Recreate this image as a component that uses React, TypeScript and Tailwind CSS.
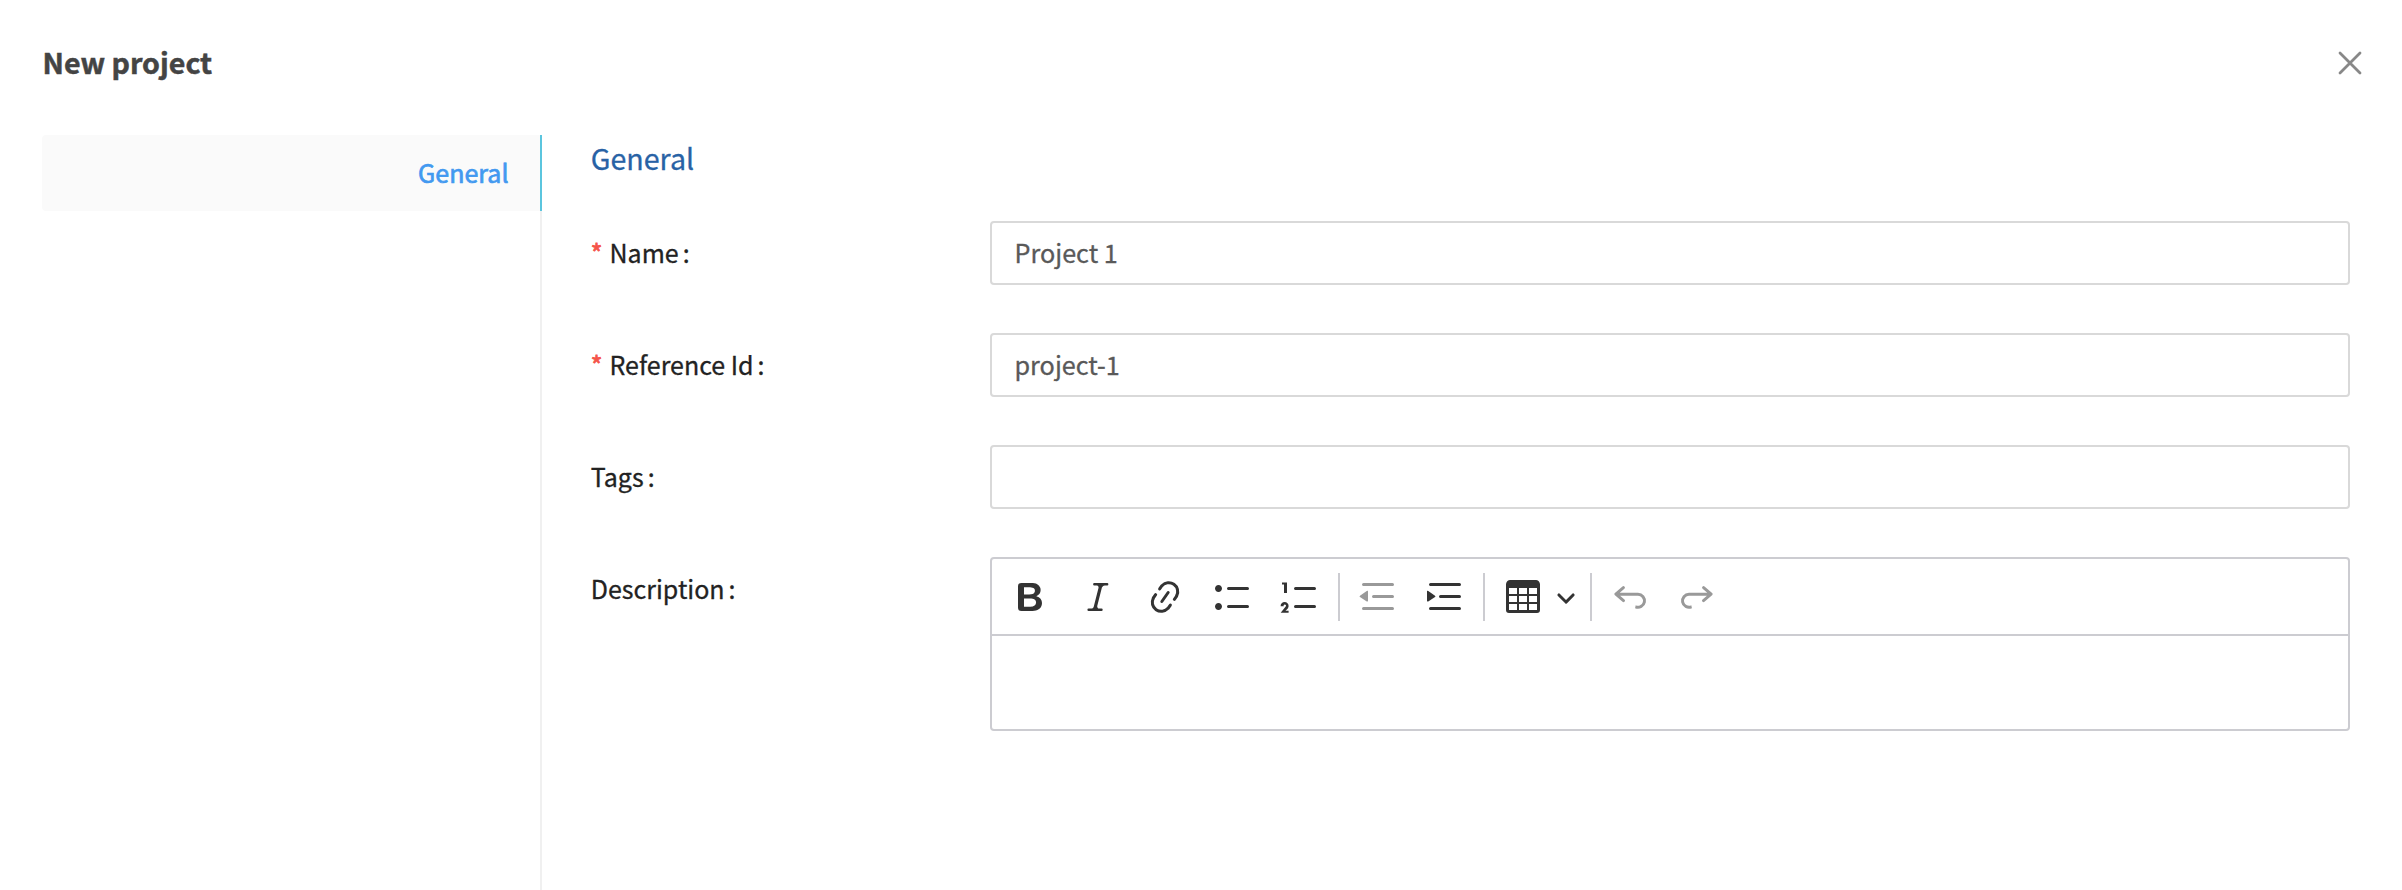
import type { ReactNode } from "react";

const ICONS = {
  bold: "M10.187 17H5.773c-.637 0-1.092-.138-1.364-.415-.273-.277-.409-.718-.409-1.323V4.738c0-.617.14-1.062.419-1.332.279-.27.73-.406 1.354-.406h4.68c.69 0 1.288.041 1.793.124.506.083.96.242 1.36.478.341.197.644.447.906.75a3.262 3.262 0 0 1 .808 2.162c0 1.401-.722 2.426-2.167 3.075C15.05 10.175 16 11.315 16 13.01a3.756 3.756 0 0 1-2.296 3.504 6.1 6.1 0 0 1-1.517.377c-.571.073-1.238.11-2 .11zm-.217-6.217H7v4.087h3.069c1.977 0 2.965-.69 2.965-2.072 0-.707-.256-1.22-.768-1.537-.512-.319-1.277-.478-2.296-.478zM7 5.13v3.619h2.606c.729 0 1.292-.067 1.69-.2a1.6 1.6 0 0 0 .91-.765c.165-.267.247-.566.247-.897 0-.707-.26-1.176-.778-1.409-.519-.232-1.31-.348-2.375-.348H7z",
  italic:
    "m9.586 14.633.021.004c-.036.335.095.655.393.962.082.083.173.15.274.201h1.474a.6.6 0 1 1 0 1.2H5.304a.6.6 0 0 1 0-1.2h1.15c.474-.07.809-.182 1.005-.334.157-.122.291-.32.404-.597l2.416-9.55a1.053 1.053 0 0 0-.281-.823 1.12 1.12 0 0 0-.442-.296H8.15a.6.6 0 0 1 0-1.2h6.443a.6.6 0 1 1 0 1.2h-1.195c-.376.056-.65.155-.823.296-.215.175-.423.439-.623.79l-2.366 9.347z",
  link: "m11.077 15 .991-1.416a.75.75 0 1 1 1.229.86l-1.148 1.64a.748.748 0 0 1-.217.206 5.251 5.251 0 0 1-8.503-5.955.741.741 0 0 1 .12-.274l1.147-1.639a.75.75 0 1 1 1.228.86L4.933 10.7l.006.003a3.75 3.75 0 0 0 6.132 4.294l.006.004zm5.494-5.335a.748.748 0 0 1-.12.274l-1.147 1.639a.75.75 0 1 1-1.228-.86l.86-1.23a3.75 3.75 0 0 0-6.144-4.301l-.86 1.229a.75.75 0 0 1-1.229-.86l1.148-1.64a.748.748 0 0 1 .217-.206 5.251 5.251 0 0 1 8.503 5.955zm-4.563-2.532a.75.75 0 0 1 .184 1.045l-3.155 4.505a.75.75 0 1 1-1.229-.86l3.155-4.506a.75.75 0 0 1 1.045-.184z",
  bulleted:
    "M7 5.75c0 .414.336.75.75.75h9.5a.75.75 0 1 0 0-1.5h-9.5a.75.75 0 0 0-.75.75zm-6 0C1 4.784 1.777 4 2.75 4c.966 0 1.75.777 1.75 1.75 0 .966-.777 1.75-1.75 1.75C1.784 7.5 1 6.723 1 5.75zm6 9c0 .414.336.75.75.75h9.5a.75.75 0 1 0 0-1.5h-9.5a.75.75 0 0 0-.75.75zm-6 0c0-.966.777-1.75 1.75-1.75.966 0 1.75.777 1.75 1.75 0 .966-.777 1.75-1.75 1.75-.966 0-1.75-.777-1.75-1.75z",
  numbered:
    "M7 5.75c0 .414.336.75.75.75h9.5a.75.75 0 1 0 0-1.5h-9.5a.75.75 0 0 0-.75.75zM3.5 3v5H2V3.7H1v-1h2.5V3zM.343 17.857l2.59-3.257H2.92a.6.6 0 1 0-1.04 0H.302a2 2 0 1 1 3.995 0h-.001c-.048.405-.16.734-.333.988-.175.254-.59.692-1.244 1.312H4.3v1h-4l.043-.043zM7 14.75a.75.75 0 0 1 .75-.75h9.5a.75.75 0 1 1 0 1.5h-9.5a.75.75 0 0 1-.75-.75z",
  outdent:
    "M2 3.75c0 .414.336.75.75.75h14.5a.75.75 0 1 0 0-1.5H2.75a.75.75 0 0 0-.75.75zm5 6c0 .414.336.75.75.75h9.5a.75.75 0 1 0 0-1.5h-9.5a.75.75 0 0 0-.75.75zM2.75 16.5h14.5a.75.75 0 1 0 0-1.5H2.75a.75.75 0 1 0 0 1.5zm1.618-9.55L.98 9.358a.4.4 0 0 0 .013.661l3.39 2.207A.4.4 0 0 0 5 11.892V7.275a.4.4 0 0 0-.632-.326z",
  indent:
    "M2 3.75c0 .414.336.75.75.75h14.5a.75.75 0 1 0 0-1.5H2.75a.75.75 0 0 0-.75.75zm5 6c0 .414.336.75.75.75h9.5a.75.75 0 1 0 0-1.5h-9.5a.75.75 0 0 0-.75.75zM2.75 16.5h14.5a.75.75 0 1 0 0-1.5H2.75a.75.75 0 1 0 0 1.5zM1.632 6.95 5.02 9.358a.4.4 0 0 1-.013.661l-3.39 2.207A.4.4 0 0 1 1 11.892V7.275a.4.4 0 0 1 .632-.326z",
  table:
    "M3 5.5v3h4v-3H3zm0 4v3h4v-3H3zm0 4v3h4v-3H3zm5 3h4v-3H8v3zm5 0h4v-3h-4v3zm4-4v-3h-4v3h4zm0-4v-3h-4v3h4zm1.5 8a1.5 1.5 0 0 1-1.5 1.5H3a1.5 1.5 0 0 1-1.5-1.5V3.5c.222-1.2 1.068-2 2-2h13c.932 0 1.778.8 2 2v13zM12 12.5v-3H8v3h4zm0-4v-3H8v3h4z",
  undo: "m5.042 9.367 2.189 1.837a.75.75 0 0 1-.965 1.149l-3.788-3.18a.747.747 0 0 1-.21-.284.75.75 0 0 1 .17-.945L6.23 4.762a.75.75 0 1 1 .964 1.15L4.863 7.866h8.917A.75.75 0 0 1 14 7.9a4 4 0 1 1-1.477 7.718l.344-1.489a2.5 2.5 0 1 0 1.094-4.73l.008-.032H5.042z",
  redo: "m14.958 9.367-2.189 1.837a.75.75 0 0 0 .965 1.149l3.788-3.18a.747.747 0 0 0 .21-.284.75.75 0 0 0-.17-.945L13.77 4.762a.75.75 0 1 0-.964 1.15l2.331 1.955H6.22A.75.75 0 0 0 6 7.9a4 4 0 1 0 1.477 7.718l-.344-1.489A2.5 2.5 0 1 1 6.039 9.4l-.008-.032h8.927z",
};

function Tool({ icon, label, disabled }: { icon: keyof typeof ICONS; label: string; disabled?: boolean }) {
  return (
    <button aria-label={label} disabled={disabled} className="size-10 shrink-0 text-[#333333] disabled:text-[#999999]">
      <svg viewBox="0 0 20 20" className="size-10 fill-current">
        <path d={ICONS[icon]} />
      </svg>
    </button>
  );
}

function Separator({ className }: { className: string }) {
  return <div className={`h-12 w-0.5 shrink-0 bg-[#ccccd1] ${className}`} />;
}

function Field({ label, required, children }: { label: string; required?: boolean; children: ReactNode }) {
  return (
    <div className="flex items-start">
      <div className="flex h-16 w-[400px] shrink-0 items-center pl-[0.8px] text-[25px] text-[#222222] [-webkit-text-stroke:0.3px]">
        {required && <span className="mr-[7px] text-[#f5554a] [-webkit-text-stroke:0.8px]">*</span>}
        <span>{label}</span>
        <span className="ml-1">:</span>
      </div>
      {children}
    </div>
  );
}

function TextInput({ value }: { value: string }) {
  return (
    <input
      defaultValue={value}
      className="h-16 min-w-0 flex-1 rounded-[4px] border-2 border-[#d9d9d9] bg-white px-[22.5px] pb-0.5 text-[25.2px] text-[#595959] outline-none [-webkit-text-stroke:0.3px]"
    />
  );
}

function Editor() {
  return (
    <div className="h-[174px] min-w-0 flex-1 rounded-[4px] border-2 border-[#ccccd1]">
      <div className="flex h-[77px] items-start border-b-2 border-[#ccccd1] pt-[14px] pl-[18px]">
        <div className="flex h-12 items-center">
          <div className="flex gap-[27.6px]">
            <Tool icon="bold" label="Bold" />
            <Tool icon="italic" label="Italic" />
            <Tool icon="link" label="Link" />
            <Tool icon="bulleted" label="Bulleted List" />
            <Tool icon="numbered" label="Numbered List" />
          </div>
          <Separator className="ml-[17.6px]" />
          <div className="ml-[18px] flex gap-[27px]">
            <Tool icon="outdent" label="Decrease indent" disabled />
            <Tool icon="indent" label="Increase indent" />
          </div>
          <Separator className="ml-[18px]" />
          <div className="ml-[18px] flex items-center gap-[13px]">
            <Tool icon="table" label="Insert table" />
            <svg viewBox="0 0 10 10" className="size-5 fill-[#333333]">
              <path d="M.941 4.523a.75.75 0 1 1 1.06-1.06l3.006 3.005 3.005-3.005a.75.75 0 1 1 1.06 1.06l-3.549 3.55a.75.75 0 0 1-1.168-.136L.941 4.523z" />
            </svg>
          </div>
          <Separator className="ml-[14px]" />
          <div className="ml-[18px] flex gap-[27.4px]">
            <Tool icon="undo" label="Undo" disabled />
            <Tool icon="redo" label="Redo" disabled />
          </div>
        </div>
      </div>
    </div>
  );
}

export default function App() {
  return (
    <div className="flex h-[890px] w-[2402px] flex-col overflow-hidden bg-white font-['Noto_Sans_CJK_SC','Noto_Sans',sans-serif]">
      <header className="flex h-[135px] shrink-0 items-start justify-between pl-[42.5px] pr-10">
        <h1 className="mt-10 text-[28.6px] leading-[44px] font-bold text-[#444444] [-webkit-text-stroke:0.5px]">
          New project
        </h1>
        <button aria-label="Close" className="mt-[51px]">
          <svg viewBox="0 0 24 24" className="size-6 stroke-[#888888]" strokeWidth="2.8" strokeLinecap="round">
            <path d="M2 2 22 22M22 2 2 22" />
          </svg>
        </button>
      </header>
      <div className="flex flex-1 pl-[42px]">
        <nav className="w-[500px] shrink-0">
          <div className="flex h-full flex-col">
            <a className="flex h-[76px] items-center justify-end rounded-l-[4px] border-r-2 border-[#5bc5de] bg-[#fafafa] pr-[31.5px] text-[25px] text-[#4299f0] [-webkit-text-stroke:0.7px]">
              General
            </a>
            <div className="flex-1 border-r-2 border-[#f0f0f0]" />
          </div>
        </nav>
        <main className="flex-1 pl-12 pr-[52px]">
          <h2 className="mt-px mb-[41px] pl-[0.8px] text-[28.6px] leading-[44px] text-[#2862a5] [-webkit-text-stroke:0.3px]">
            General
          </h2>
          <div className="flex flex-col gap-12">
            <Field label="Name" required>
              <TextInput value="Project 1" />
            </Field>
            <Field label="Reference Id" required>
              <TextInput value="project-1" />
            </Field>
            <Field label="Tags">
              <TextInput value="" />
            </Field>
            <Field label="Description">
              <Editor />
            </Field>
          </div>
        </main>
      </div>
    </div>
  );
}
